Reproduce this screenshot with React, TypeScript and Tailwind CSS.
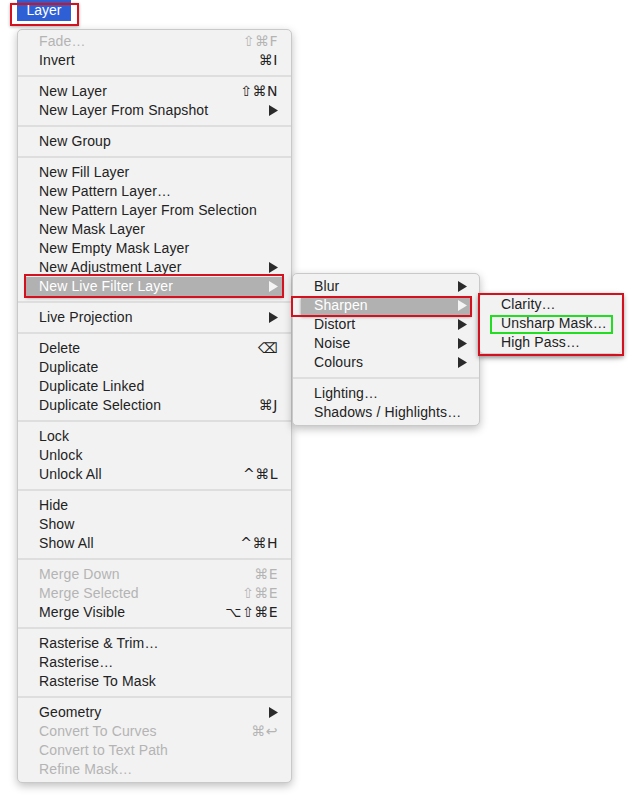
type Item =
  | { sep: true }
  | { label: string; key?: string; sub?: boolean; off?: boolean; hot?: boolean };

const SEP: Item = { sep: true };

const mainItems: Item[] = [
  { label: "Fade…", key: "⇧⌘F", off: true },
  { label: "Invert", key: "⌘I" },
  SEP,
  { label: "New Layer", key: "⇧⌘N" },
  { label: "New Layer From Snapshot", sub: true },
  SEP,
  { label: "New Group" },
  SEP,
  { label: "New Fill Layer" },
  { label: "New Pattern Layer…" },
  { label: "New Pattern Layer From Selection" },
  { label: "New Mask Layer" },
  { label: "New Empty Mask Layer" },
  { label: "New Adjustment Layer", sub: true },
  { label: "New Live Filter Layer", sub: true, hot: true },
  SEP,
  { label: "Live Projection", sub: true },
  SEP,
  { label: "Delete", key: "⌫" },
  { label: "Duplicate" },
  { label: "Duplicate Linked" },
  { label: "Duplicate Selection", key: "⌘J" },
  SEP,
  { label: "Lock" },
  { label: "Unlock" },
  { label: "Unlock All", key: "^⌘L" },
  SEP,
  { label: "Hide" },
  { label: "Show" },
  { label: "Show All", key: "^⌘H" },
  SEP,
  { label: "Merge Down", key: "⌘E", off: true },
  { label: "Merge Selected", key: "⇧⌘E", off: true },
  { label: "Merge Visible", key: "⌥⇧⌘E" },
  SEP,
  { label: "Rasterise & Trim…" },
  { label: "Rasterise…" },
  { label: "Rasterise To Mask" },
  SEP,
  { label: "Geometry", sub: true },
  { label: "Convert To Curves", key: "⌘↩", off: true },
  { label: "Convert to Text Path", off: true },
  { label: "Refine Mask…", off: true },
];

const filterItems: Item[] = [
  { label: "Blur", sub: true },
  { label: "Sharpen", sub: true, hot: true },
  { label: "Distort", sub: true },
  { label: "Noise", sub: true },
  { label: "Colours", sub: true },
  SEP,
  { label: "Lighting…" },
  { label: "Shadows / Highlights…" },
];

const sharpenItems: Item[] = [
  { label: "Clarity…" },
  { label: "Unsharp Mask…" },
  { label: "High Pass…" },
];

function Arrow({ light }: { light?: boolean }) {
  return (
    <svg width="9" height="11" viewBox="0 0 9 11" className="shrink-0">
      <path d="M0 0 L9 5.5 L0 11 Z" fill={light ? "#f4f4f4" : "#2b2b2b"} />
    </svg>
  );
}

function Rows({ items, right }: { items: Item[]; right: string }) {
  return (
    <>
      {items.map((it, i) => {
        if ("sep" in it) {
          return <div key={i} className="my-[5px] h-[2px] bg-[#dedede]" />;
        }
        const color = it.hot ? "text-white" : it.off ? "text-[#b4b4b4]" : "text-[#222]";
        return (
          <div
            key={i}
            className={`relative flex h-[19px] items-center justify-between pl-[21px] ${right} ${color}`}
          >
            {it.hot && (
              <div className="absolute inset-x-[8px] inset-y-0 bg-[#b1b1b1] shadow-[0_2px_3px_rgba(0,0,0,0.35)]" />
            )}
            <span className="relative whitespace-nowrap tracking-[0.12px]">{it.label}</span>
            {it.key && (
              <span
                className="relative whitespace-nowrap text-[14px] tracking-[0.5px]"
                style={{ fontFamily: "'DejaVu Sans', 'Liberation Sans', sans-serif" }}
              >
                {it.key}
              </span>
            )}
            {it.sub && (
              <span className="relative">
                <Arrow light={it.hot} />
              </span>
            )}
          </div>
        );
      })}
    </>
  );
}

export default function App() {
  return (
    <div
      className="relative h-[804px] w-[642px] overflow-hidden bg-white text-[14px] leading-[19px]"
      style={{ fontFamily: "'Liberation Sans', Arial, sans-serif" }}
    >
      <div className="ml-[17px] flex h-[21px] w-[54px] items-center justify-center bg-[#2f5fd5] text-white">
        Layer
      </div>
      <div className="absolute left-[10px] top-[3px] h-[23px] w-[69px] border-2 border-[#d3111f] shadow-[0_1px_3px_rgba(0,0,0,0.3)]" />

      <div className="ml-[17px] mt-[8px] w-[275px] rounded-[5px] border border-[#c9c9c9] bg-[#f2f2f2] pb-[3px] pt-[2px] shadow-[0_3px_8px_rgba(0,0,0,0.25)]">
        <Rows items={mainItems} right="pr-[13px]" />
      </div>

      {/* Live filter submenu */}
      <div className="absolute left-[292px] top-[273px] w-[188px] rounded-[5px] border border-[#c9c9c9] bg-[#f2f2f2] py-[3px] shadow-[0_3px_8px_rgba(0,0,0,0.25)]">
        <Rows items={filterItems} right="pr-[12px]" />
      </div>

      {/* Sharpen submenu */}
      <div className="absolute left-[480px] top-[294px] w-[141px] rounded-[4px] bg-[#f2f2f2] py-[1px] shadow-[0_3px_8px_rgba(0,0,0,0.25)]">
        <Rows items={sharpenItems} right="pr-[12px]" />
      </div>

      {/* annotation boxes */}
      <div className="absolute left-[24px] top-[274px] h-[24px] w-[260px] border-2 border-[#d3111f]" />
      <div className="absolute left-[291px] top-[296px] h-[21px] w-[181px] border-2 border-[#d3111f]" />
      <div className="absolute left-[478px] top-[293px] h-[63px] w-[146px] border-2 border-[#d3111f] shadow-[0_2px_4px_rgba(0,0,0,0.3)]" />
      <div className="absolute left-[490px] top-[315px] h-[19px] w-[123px] border-2 border-[#22dd22]" />
    </div>
  );
}
